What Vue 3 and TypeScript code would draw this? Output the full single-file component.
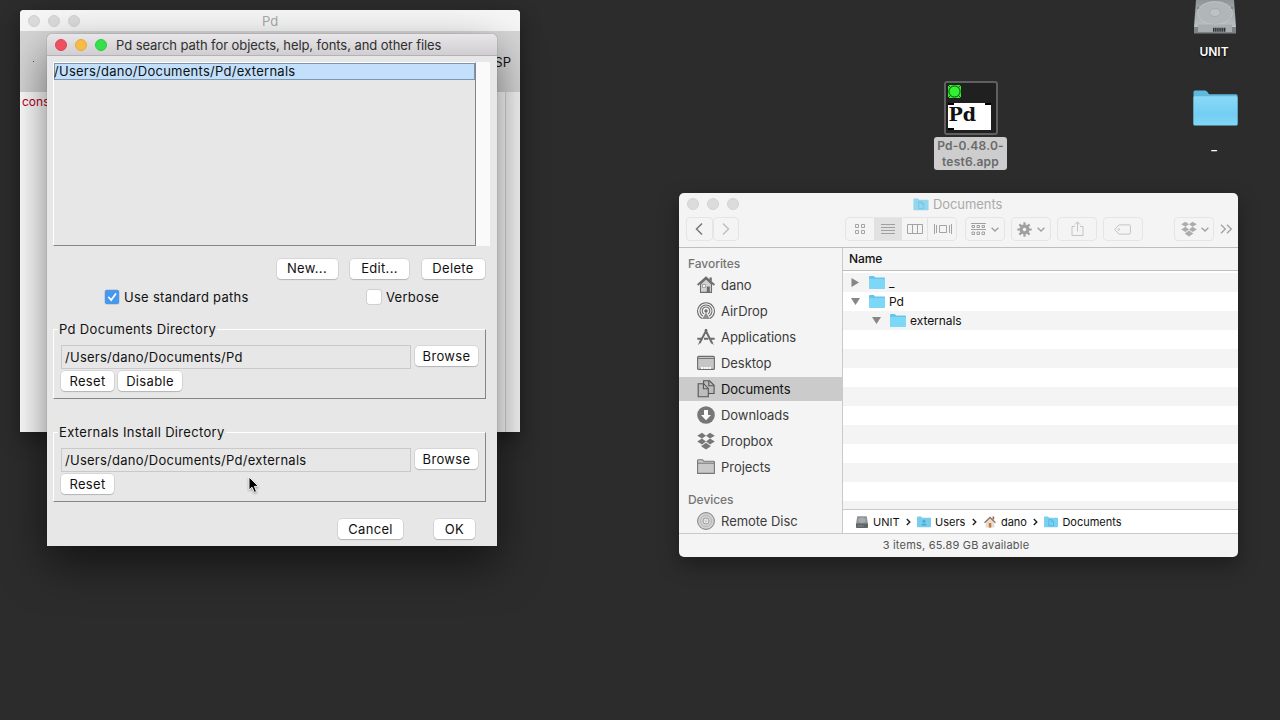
<script setup lang="ts">
interface Place {
  label: string
  icon: string
  selected?: boolean
}
interface FileRow {
  name: string
  open: boolean
  level: number
}

const favorites: Place[] = [
  { label: 'dano', icon: 'home' },
  { label: 'AirDrop', icon: 'airdrop' },
  { label: 'Applications', icon: 'apps' },
  { label: 'Desktop', icon: 'desktop' },
  { label: 'Documents', icon: 'documents', selected: true },
  { label: 'Downloads', icon: 'downloads' },
  { label: 'Dropbox', icon: 'dropbox' },
  { label: 'Projects', icon: 'projects' },
]

const files: FileRow[] = [
  { name: '_', open: false, level: 0 },
  { name: 'Pd', open: true, level: 0 },
  { name: 'externals', open: true, level: 1 },
]

const crumbs: Place[] = [
  { label: 'UNIT', icon: 'drive-small' },
  { label: 'Users', icon: 'folder-user' },
  { label: 'dano', icon: 'home-color' },
  { label: 'Documents', icon: 'folder-doc' },
]
</script>

<template>
  <div class="screen">
    <svg class="sprite" width="0" height="0">
      <defs>
        <linearGradient id="gFolder" x1="0" y1="0" x2="0" y2="1">
          <stop offset="0" stop-color="#8ad9f7" />
          <stop offset="0.6" stop-color="#74cef3" />
          <stop offset="1" stop-color="#80d7f5" />
        </linearGradient>
        <linearGradient id="gDrive" x1="0" y1="0" x2="0" y2="1">
          <stop offset="0" stop-color="#8f9698" />
          <stop offset="1" stop-color="#bcc1c2" />
        </linearGradient>
      </defs>
      <symbol id="home" viewBox="0 0 18 18">
        <path d="M12.5 1.5h2.3v4l-2.3-2z" fill="#6c6c6c" />
        <path d="M3.5 8v8.4h11V8L9 2.8z" fill="#d2d2d2" stroke="#6c6c6c" stroke-width="1.1" />
        <path d="M.6 9L9 1.5 17.4 9" fill="none" stroke="#6c6c6c" stroke-width="1.7" />
        <path d="M9.8 10.5h3v6h-3z" fill="#6c6c6c" />
        <path d="M5.5 8.5h3v3h-3z" fill="#f4f4f4" stroke="#8b8b8b" stroke-width=".7" />
      </symbol>
      <symbol id="airdrop" viewBox="0 0 18 18">
        <g fill="none" stroke="#6c6c6c" stroke-width="1.1">
          <path d="M5.2 16.6a8.4 8.4 0 1 1 7.6 0" />
          <path d="M5.9 14.1a6 6 0 1 1 6.2 0" />
          <path d="M6.8 11.9a3.8 3.8 0 1 1 4.4 0" />
        </g>
        <circle cx="9" cy="9" r="1.7" fill="#6c6c6c" />
        <path d="M9 10.5l4 6.5H5z" fill="#8f8f8f" />
      </symbol>
      <symbol id="apps" viewBox="0 0 18 18">
        <g fill="none" stroke="#6c6c6c">
          <path d="M8.2 1.5l6.9 13.8M9.8 1.5L2.6 15" stroke-width="2" />
          <path d="M.3 10.7h5M7 10.7h4.3M13.3 10.7h4.4" stroke-width="2" />
          <path d="M14.6 13.8l1.7 2.7M3.2 13.8l-1.8 2.7" stroke-width="1" />
        </g>
      </symbol>
      <symbol id="desktop" viewBox="0 0 18 18">
        <rect x=".6" y="2.4" width="16.8" height="13" rx="1" fill="#c6c6c6" stroke="#6c6c6c" stroke-width="1.1" />
        <path d="M1 4.5h16" stroke="#777" />
        <path d="M4 14h10" stroke="#fff" stroke-width="2" stroke-dasharray="2 .6" />
      </symbol>
      <symbol id="documents" viewBox="0 0 18 18">
        <g fill="#bdbdbd" stroke="#555" stroke-width="1.1">
          <path d="M6.6.8h6l4.5 4.5v8.2H6.6z" />
          <path d="M11.8 1v4.8h5" fill="none" />
          <path d="M1.2 3.7h5.5l4.6 4.7v8.3H1.2z" />
          <path d="M6.4 4v4.8h4.8" fill="none" />
        </g>
      </symbol>
      <symbol id="downloads" viewBox="0 0 18 18">
        <circle cx="9" cy="9" r="8.8" fill="#777" />
        <path d="M7 4h4v5h3l-5 5.2L4 9h3z" fill="#fff" />
      </symbol>
      <symbol id="dropbox" viewBox="0 0 18 18">
        <path
          d="M5 .8l4 2.900-4 2.900-4.800-2.900zM13 .8l4.800 2.900L13 6.600 9 3.700zM.2 9.500L5 6.600l4 2.900-4 2.900zM13 6.600l4.800 2.900L13 12.400 9 9.500zM4.500 13.200l.7.300L9 10.800l3.800 2.700.7-.3v1.200L9 17.400l-4.500-3z"
          fill="currentColor"
        />
      </symbol>
      <symbol id="projects" viewBox="0 0 18 18">
        <path d="M.6 15.4V2.6q0-.9.9-.9h4l1.3 1.6h9.7q.9 0 .9.9v11.2z" fill="#c9c9c9" stroke="#777" stroke-width="1.1" />
        <path d="M1 5.2h16" stroke="#777" />
      </symbol>
      <symbol id="disc" viewBox="0 0 18 18">
        <circle cx="9" cy="9" r="8.4" fill="#d2d2d2" stroke="#808080" stroke-width="1" />
        <circle cx="9" cy="9" r="5.6" fill="none" stroke="#aaa" stroke-width=".7" />
        <circle cx="9" cy="9" r="3" fill="#e9e9e9" stroke="#999" stroke-width=".9" />
        <circle cx="9" cy="9" r="1" fill="#fff" stroke="#999" stroke-width=".5" />
      </symbol>
      <symbol id="folder" viewBox="0 0 16 13">
        <path d="M0 12V1q0-1 1-1h3.8l1.4 1.5H15q1 0 1 1V12q0 .7-1 .7H1q-1 0-1-.7z" fill="#67c4ea" />
        <path d="M0 3.1h16V12q0 .7-1 .7H1q-1 0-1-.7z" fill="#7dd7f6" />
      </symbol>
      <symbol id="folder-user" viewBox="0 0 14 12">
        <path d="M0 10.500V1.300q0-.8.8-.8H4l1.200 1.200h8q.8 0 .8.8v8q0 .7-.8.7H.8q-.8 0-.8-.7z" fill="#79cdec" />
        <circle cx="7" cy="5.200" r="1.500" fill="#4fa9cf" />
        <path d="M4.200 9.600q.2-2.200 2.800-2.200t2.800 2.200z" fill="#4fa9cf" />
      </symbol>
      <symbol id="folder-doc" viewBox="0 0 14 12">
        <path d="M0 10.500V1.300q0-.8.8-.8H4l1.200 1.200h8q.8 0 .8.8v8q0 .7-.8.7H.8q-.8 0-.8-.7z" fill="#79d0f0" />
        <path d="M4.800 3.500h2.700l2 2v4.300H4.800zM7.300 3.700v2h2" fill="none" stroke="#55b0d6" stroke-width=".7" />
      </symbol>
      <symbol id="home-color" viewBox="0 0 14 12">
        <path d="M9.500.5h1.700v3H9.500z" fill="#9a6b52" />
        <path d="M2.600 6L7 2l4.400 4v5.600H2.600z" fill="#e6ddd0" />
        <path d="M5.800 7h2.500v4.600H5.800z" fill="#c87b41" />
        <path d="M1.500 6.700L7 1.500l5.500 5.200" fill="none" stroke="#8b7468" stroke-width="1.300" />
      </symbol>
      <symbol id="drive-small" viewBox="0 0 14 12">
        <path d="M2.200.2h9.600l1.200 8H1z" fill="#8f9597" />
        <ellipse cx="7" cy="4.200" rx="3.800" ry="2.600" fill="#a6acae" />
        <path d="M1 7.500h12v3.700q0 .8-.8.8H1.800q-.8 0-.8-.8z" fill="#5f6466" />
        <path d="M2.500 10h6" stroke="#8b9193" stroke-width=".8" />
      </symbol>
      <symbol id="chev" viewBox="0 0 8 5">
        <path d="M.6.700L4 4 7.400.700" fill="none" stroke="#a0a0a0" stroke-width="1.300" />
      </symbol>
    </svg>

    <!-- Desktop items -->
    <div class="desk drive">
      <svg width="44" height="35" viewBox="0 0 44 35">
        <path d="M3 0h38l2 27H1z" fill="url(#gDrive)" />
        <path d="M1 27h42v6.500H1z" fill="#7d8486" />
        <ellipse cx="22" cy="13" rx="17.500" ry="11.500" fill="#b1b6b8" stroke="#c6cbcc" stroke-width=".7" />
        <ellipse cx="22" cy="12.500" rx="5.500" ry="4" fill="#bcc1c2" stroke="#9aa0a2" stroke-width=".6" />
        <path d="M5 24.500h34v7.500H5z" fill="#a8aeb0" />
        <path d="M20 29.700h13" stroke="#2e3133" stroke-width="4" stroke-dasharray="1.500 .6" />
        <circle cx="5" cy="8" r=".7" fill="#4d5153" /><circle cx="39" cy="8" r=".7" fill="#4d5153" />
      </svg>
      <span>UNIT</span>
    </div>
    <div class="desk deskfolder">
      <svg width="46" height="36" viewBox="0 0 46 36">
        <path d="M.5 34V2q0-1.500 1.500-1.500h10q1.500 0 2.500 1.500l1.500 2.200h27q1.500 0 1.500 1.500V34z" fill="#5fb9df" />
        <path d="M.5 7.500q0-1.300 1.300-1.300h41.400q1.300 0 1.300 1.300V34.200q0 1.300-1.300 1.300H1.800Q.5 35.500.5 34.200z" fill="url(#gFolder)" />
      </svg>
      <span>_</span>
    </div>
    <div class="desk pdapp">
      <div class="pdicon">
        <svg width="13" height="13" viewBox="0 0 14 14">
          <rect width="14" height="14" fill="#32f032" />
          <circle cx="7" cy="7" r="6" fill="#32f032" stroke="#0b3b0b" stroke-width="1" />
          <path d="M0 0l2.500 2.500M14 0l-2.500 2.500M0 14l2.500-2.500M14 14l-2.500-2.500" stroke="#0b3b0b" />
        </svg>
        <div class="object">Pd</div>
      </div>
      <div class="pdname">Pd-0.48.0-<br />test6.app</div>
    </div>

    <!-- Pd console -->
    <section class="win console">
      <header class="bar"><i /><i /><i /><b>Pd</b></header>
      <div class="tools"><em /><span>DSP</span></div>
      <div class="log"><span>consistency</span><div class="scroll" /></div>
    </section>

    <!-- Search path dialog -->
    <section class="win dialog">
      <header class="bar live"><i class="red" /><i class="yel" /><i class="grn" /><b>Pd search path for objects, help, fonts, and other files</b></header>
      <div class="body">
        <div class="listwrap">
          <div class="list"><div class="item">/Users/dano/Documents/Pd/externals</div></div>
          <div class="lscroll" />
        </div>
        <div class="actions">
          <button class="new">New...</button><button class="edit">Edit...</button><button class="browse">Delete</button>
        </div>
        <div class="checks">
          <label class="first">
            <span class="box on"><svg width="14" height="14" viewBox="0 0 14 14"><path d="M3.700 7.300l2.500 2.800L10.600 4" fill="none" stroke="#fff" stroke-width="1.700" stroke-linecap="round" /></svg></span>
            <span>Use standard paths</span>
          </label>
          <label><span class="box" /><span>Verbose</span></label>
        </div>
        <div class="frame">
          <span class="legend">Pd Documents Directory</span>
          <div class="line"><div class="entry">/Users/dano/Documents/Pd</div><button class="browse">Browse</button></div>
          <div class="line second"><button class="reset">Reset</button><button class="disable">Disable</button></div>
        </div>
        <div class="frame lower">
          <span class="legend">Externals Install Directory</span>
          <div class="line"><div class="entry">/Users/dano/Documents/Pd/externals</div><button class="browse">Browse</button></div>
          <div class="line second"><button class="reset">Reset</button></div>
        </div>
        <div class="confirm"><button class="cancel">Cancel</button><button class="ok">OK</button></div>
      </div>
    </section>

    <!-- Finder -->
    <section class="win finder">
      <header class="ftitle">
        <div class="lights"><i /><i /><i /></div>
        <div class="fname"><svg width="16" height="13"><use href="#folder-doc" /></svg><span>Documents</span></div>
      </header>
      <div class="toolbar">
        <div class="tb nav"><svg width="8" height="14" viewBox="0 0 8 14"><path d="M7 1.500L1.500 7 7 12.500" fill="none" stroke="#777" stroke-width="1.500" /></svg></div>
        <div class="tb nav next"><svg width="8" height="14" viewBox="0 0 8 14"><path d="M1 1.500L6.500 7 1 12.500" fill="none" stroke="#c0c0c0" stroke-width="1.500" /></svg></div>
        <div class="tb views">
          <span class="v1"><svg width="12" height="12" viewBox="0 0 12 12" fill="none" stroke="#a4a4a4"><path d="M1.500 1.500h3v3h-3zM7.500 1.500h3v3h-3zM1.500 7.500h3v3h-3zM7.500 7.500h3v3h-3z" /></svg></span>
          <span class="v2"><svg width="16" height="12" viewBox="0 0 16 12" stroke="#a0a0a0"><path d="M1 1.500h14M1 4.500h14M1 7.500h14M1 10.500h14" /></svg></span>
          <span class="v3"><svg width="16" height="12" viewBox="0 0 16 12" fill="none" stroke="#a4a4a4"><path d="M.5 1.500h15v9H.5zM5.500 1.500v9M10.500 1.500v9" /></svg></span>
          <span class="v4"><svg width="20" height="12" viewBox="0 0 20 12" fill="none" stroke="#a4a4a4"><path d="M1.500 1v10M3.500 2v8M6.500 2.500h7v7h-7zM16.500 2v8M18.500 1v10" /></svg></span>
        </div>
        <div class="tb arrange">
          <svg width="15" height="13" viewBox="0 0 15 13" fill="none" stroke="#a0a0a0"><path d="M0 .5h15M0 6.500h15M1 2.500h2.500v2H1zM6 2.500h2.500v2H6zM11 2.500h2.500v2H11zM1 9h2.500v2.500H1zM6 9h2.500v2.500H6zM11 9h2.500v2.500H11z" /></svg>
          <svg width="8" height="5"><use href="#chev" /></svg>
        </div>
        <div class="tb gear">
          <svg width="15" height="15" viewBox="0 0 15 15"><path d="M7.500.3v14.400M.3 7.500h14.400M2.400 2.400l10.200 10.200M12.600 2.400L2.400 12.600" stroke="#a0a0a0" stroke-width="2.200" /><circle cx="7.500" cy="7.500" r="5" fill="#a0a0a0" /><circle cx="7.500" cy="7.500" r="1.700" fill="#f4f4f4" /></svg>
          <svg width="8" height="5"><use href="#chev" /></svg>
        </div>
        <div class="tb share"><svg width="13" height="16" viewBox="0 0 13 16" fill="none" stroke="#c4c4c4"><path d="M4 5.500H1v9h11v-9H9M6.500 10.500V1M3.800 3.600L6.500.9l2.700 2.700" /></svg></div>
        <div class="tb tag"><svg width="17" height="11" viewBox="0 0 17 11" fill="none" stroke="#c4c4c4"><path d="M5 .9h10.200q1.200 0 1.200 1.200v6.800q0 1.200-1.200 1.200H5L.7 5.500z" /><circle cx="4.800" cy="5.500" r=".8" /></svg></div>
        <div class="tb dbx"><svg class="grey" width="16" height="16"><use href="#dropbox" /></svg><svg width="8" height="5"><use href="#chev" /></svg></div>
        <svg class="more" width="13" height="10" viewBox="0 0 13 10" fill="none" stroke="#a4a4a4" stroke-width="1.400"><path d="M1 .8L5.300 5 1 9.200M7 .8L11.300 5 7 9.200" /></svg>
      </div>
      <div class="main">
        <aside>
          <h4>Favorites</h4>
          <div v-for="p in favorites" :key="p.label" class="place" :class="{ selected: p.selected }">
            <svg width="18" height="18"><use :href="'#' + p.icon" /></svg><span>{{ p.label }}</span>
          </div>
          <h4 class="dev">Devices</h4>
          <div class="place"><svg width="18" height="18"><use href="#disc" /></svg><span>Remote Disc</span></div>
        </aside>
        <div class="content">
          <div class="head">Name</div>
          <div class="rows">
            <div v-for="f in files" :key="f.name" class="row" :class="['l' + f.level, { open: f.open }]">
              <svg class="tri" width="9" height="9" viewBox="0 0 9 9"><path :d="f.open ? 'M0 1h9L4.500 8z' : 'M.5 0v9L8 4.500z'" fill="#868686" /></svg>
              <svg width="16" height="13"><use href="#folder" /></svg><span>{{ f.name }}</span>
            </div>
          </div>
          <div class="path">
            <template v-for="(c, n) in crumbs" :key="c.label">
              <svg v-if="n" class="sep" width="5" height="8" viewBox="0 0 5 8"><path d="M.8 1L3.800 4 .8 7" fill="none" stroke="#222" stroke-width="1.400" /></svg>
              <svg width="14" height="12"><use :href="'#' + c.icon" /></svg><span>{{ c.label }}</span>
            </template>
          </div>
        </div>
      </div>
      <footer>3 items, 65.89 GB available</footer>
    </section>

    <svg class="cursor" width="13" height="19" viewBox="0 0 13 19"><path d="M1 1v13l3-2.800 2.300 5.200 2.200-1L6.300 10.400h4.200z" fill="#000" stroke="#fff" stroke-width=".9" /></svg>
  </div>
</template>

<style>
body {
  margin: 0;
  overflow: hidden;
}
</style>

<style scoped>
.screen {
  position: relative;
  width: 1280px;
  height: 720px;
  overflow: hidden;
  background: #2c2c2c;
  font-family: Inter, 'Liberation Sans', sans-serif;
  font-size: 13px;
  color: #111;
}
.screen * {
  box-sizing: border-box;
}
.screen svg {
  display: block;
  flex: none;
}
.sprite,
.desk,
.win,
.cursor {
  position: absolute;
}
.screen span,
.screen b {
  white-space: nowrap;
}

/* desktop */
.desk {
  display: flex;
  flex-direction: column;
  align-items: center;
  color: #fff;
  font-weight: 600;
  font-size: 12px;
}
.drive {
  left: 1174px;
  top: 0;
  width: 80px;
}
.drive svg {
  margin-left: 2px;
}
.drive span {
  margin-top: 9px;
  line-height: 15px;
  text-shadow: 0 1px 2px #000;
}
.deskfolder {
  left: 1174px;
  top: 90px;
  width: 80px;
}
.deskfolder svg {
  margin-left: 3px;
}
.deskfolder span {
  margin-top: 12px;
  line-height: 15px;
}
.pdapp {
  left: 930px;
  top: 81px;
  width: 81px;
}
.pdicon {
  width: 54px;
  height: 54px;
  border: 2px solid #606060;
  border-radius: 3px;
  background: #202020;
  padding: 2px 0 0 2px;
}
.object {
  width: 43px;
  height: 27px;
  margin-top: 5px;
  background:
    linear-gradient(#000, #000) 0 0 / 6px 2px no-repeat,
    linear-gradient(#000, #000) 100% 0 / 6px 2px no-repeat,
    linear-gradient(#000, #000) 0 100% / 6px 2px no-repeat,
    #fff;
  color: #111;
  font: bold 19px/23px 'DejaVu Serif', serif;
  padding-left: 1px;
}
.pdname {
  margin-top: 2px;
  width: 73px;
  height: 33px;
  padding-top: 1px;
  border-radius: 3px;
  background: #cdcdcd;
  color: #6a6a6a;
  text-align: center;
  line-height: 16px;
  letter-spacing: 0.22px;
}

/* shared window chrome */
.win {
  display: flex;
  flex-direction: column;
  overflow: hidden;
}
.bar {
  display: flex;
  align-items: center;
  flex: none;
  height: 22px;
}
i {
  width: 12px;
  height: 12px;
  margin-right: 8px;
  border-radius: 50%;
  background: #dcdcdc;
  border: 1px solid #d3d3d3;
}
.bar b {
  font-weight: 400;
}

.console {
  left: 20px;
  top: 10px;
  width: 500px;
  height: 421.5px;
  border-radius: 4px 4px 0 0;
  background: #fff;
  box-shadow: 0 8px 20px rgba(0, 0, 0, 0.35);
}
.console .bar {
  height: 21px;
  padding: 1px 0 0 8px;
  background: #f6f6f6;
}
.console .bar b {
  margin-left: 174px;
  color: #a9a9a9;
}
.tools {
  display: flex;
  justify-content: space-between;
  align-items: center;
  height: 61px;
  padding: 0 9px 0 13px;
  background: #d6d6d6;
}
.tools em {
  width: 1px;
  height: 1px;
  background: #555;
}
.log {
  display: flex;
  justify-content: space-between;
  flex: 1;
  background: #fff;
  color: #c00022;
  font-size: 12px;
}
.log span {
  padding: 2px 0 0 2px;
}
.scroll {
  width: 15px;
  background: #f6f6f6;
  border-left: 1px solid #d8d8d8;
}

.dialog {
  left: 47px;
  top: 34px;
  width: 450px;
  height: 512px;
  border-radius: 5px 5px 0 0;
  background: #e7e7e7;
  box-shadow:
    0 0 1px rgba(0, 0, 0, 0.6),
    0 18px 45px rgba(0, 0, 0, 0.55);
}
.live {
  padding-left: 8px;
  background: linear-gradient(#e8e6e8, #d0ced0);
  border-bottom: 1px solid #b4b2b4;
}
.live b {
  margin-left: 1px;
  color: #2f2f2f;
  letter-spacing: -0.07px;
}
.red {
  background: #ed5161;
  border-color: #dc4655;
}
.yel {
  background: #f6bc45;
  border-color: #e4aa3a;
}
.grn {
  background: #36df4d;
  border-color: #2bcb42;
}
.body {
  padding: 6px 6px 0;
  letter-spacing: 0.33px;
}
.listwrap {
  display: flex;
  height: 184px;
}
.list {
  width: 423px;
  border: 1px solid;
  border-color: #fff #858585 #858585 #fff;
}
.item {
  height: 17px;
  background: #c2e0fb;
  border: 1px solid #7e95ab;
  line-height: 15px;
  text-indent: -1px;
  letter-spacing: 0.26px;
}
.lscroll {
  width: 14px;
  background: #fafafa;
}
.actions {
  display: flex;
  justify-content: flex-end;
  gap: 12.5px;
  padding: 12.5px 6.5px 0 0;
}
button {
  flex: none;
  height: 20px;
  padding: 0;
  border: 0;
  border-radius: 4px;
  background: #fff;
  box-shadow:
    0 0 0 0.5px rgba(0, 0, 0, 0.14),
    0 1px 1px rgba(0, 0, 0, 0.16);
  color: #111;
  font: inherit;
  letter-spacing: inherit;
  line-height: 19px;
}
.ok { width: 41px; }
.reset { width: 53px; }
.edit { width: 59px; }
.new { width: 61px; }
.browse { width: 63px; }
.disable { width: 64px; }
.cancel { width: 65px; }
.checks {
  display: flex;
  padding: 9px 0 0 52px;
  height: 26px;
}
.checks label {
  display: flex;
  align-items: center;
  height: 18px;
  letter-spacing: 0.28px;
}
.checks .first {
  width: 262px;
}
.box {
  width: 14px;
  height: 14px;
  margin-right: 5px;
  border-radius: 2px;
  background: #fff;
  box-shadow: 0 0 0 0.5px rgba(0, 0, 0, 0.2);
}
.on {
  background: #4598ed;
}
.frame {
  position: relative;
  width: 433px;
  height: 70px;
  margin-top: 24.5px;
  padding: 15px 7px 0;
  border: 1px solid;
  border-color: #fff #858585 #858585 #fff;
}
.lower {
  margin-top: 33px;
}
.legend {
  position: absolute;
  left: 4px;
  top: -9px;
  padding: 0 1px;
  background: #e7e7e7;
  line-height: 16px;
}
.line {
  display: flex;
  align-items: flex-start;
  gap: 4px;
}
.line .browse {
  margin-top: 1px;
}
.entry {
  width: 350px;
  height: 24px;
  padding-left: 3px;
  border: 1px solid #c9c9c9;
  line-height: 23px;
  letter-spacing: 0.26px;
}
.second {
  margin-top: 2px;
}
.confirm {
  display: flex;
  justify-content: flex-end;
  gap: 31px;
  padding: 17px 16px 0 0;
}

/* finder */
.finder {
  left: 679px;
  top: 193px;
  width: 559px;
  height: 364px;
  border-radius: 5px;
  background: #f4f4f4;
  box-shadow: 0 8px 20px rgba(0, 0, 0, 0.35);
}
.ftitle {
  display: flex;
  height: 22px;
  align-items: center;
}
.lights {
  display: flex;
  width: 234px;
  padding-left: 8px;
}
.fname {
  display: flex;
  align-items: center;
  gap: 4px;
  color: #aaa;
  letter-spacing: -0.08px;
}
.fname svg {
  opacity: 0.8;
}
.toolbar {
  display: flex;
  height: 33px;
  padding: 2px 0 0 7px;
  border-bottom: 1px solid #bcc0bc;
}
.tb {
  display: flex;
  align-items: center;
  justify-content: center;
  gap: 5px;
  width: 40px;
  height: 24px;
  margin-right: 6px;
  border: 1px solid #e5e5e5;
  border-radius: 4px;
}
.tb.nav {
  width: 27px;
  margin: 0;
  padding-right: 2px;
}
.tb.next {
  width: 26px;
  padding-right: 0;
}
.views {
  width: 112px;
  margin: 0 8px 0 106px;
  gap: 0;
  overflow: hidden;
}
.views span {
  display: flex;
  align-items: center;
  justify-content: center;
  height: 22px;
}
.v1 { width: 28px; }
.v2 { width: 28px; background: #e1e1e1; }
.v3 { width: 26px; border-right: 1px solid #e3e3e3; }
.views .v4 { width: 28px; padding-left: 1px; }
.tag {
  padding-right: 1px;
}
.dbx {
  margin: 0 6px 0 25px;
  gap: 4px;
  padding-left: 1px;
}
.grey {
  color: #acacac;
}
.more {
  margin-top: 7px;
}
.main {
  display: flex;
  height: 285px;
}
aside {
  width: 164px;
  padding-top: 6px;
  border-right: 1px solid #c9c9c9;
  letter-spacing: -0.05px;
  overflow: hidden;
}
h4 {
  margin: 0;
  padding-left: 9px;
  height: 18px;
  line-height: 19px;
  font-size: 12px;
  font-weight: 500;
  color: #747474;
}
h4.dev {
  margin-top: 10px;
}
.place {
  display: flex;
  align-items: center;
  gap: 6px;
  height: 26px;
  padding-left: 18px;
  color: #3c3c3c;
}
.place svg {
  color: #777;
}
.selected {
  height: 24px;
  margin: 1px 0;
  background: #cbcbcb;
  color: #111;
}
.content {
  display: flex;
  flex-direction: column;
  flex: 1;
}
.head {
  height: 23px;
  padding-left: 6px;
  border-bottom: 1px solid #bcc0bc;
  line-height: 22px;
  font-size: 12px;
  font-weight: 500;
  letter-spacing: -0.1px;
}
.rows {
  height: 238px;
  padding-top: 2px;
  background: repeating-linear-gradient(#f4f4f4 0 19px, #fff 19px 38px) 0 2px / 100% 236px no-repeat #fff;
  font-size: 12px;
}
.row {
  display: flex;
  align-items: center;
  height: 19px;
  padding-left: 8px;
}
.row.open {
  padding-left: 7.5px;
}
.row.l1 {
  padding-left: 28.5px;
}
.tri {
  margin-right: 9px;
}
.open .tri {
  margin-right: 9.5px;
}
.row span {
  margin-left: 4px;
  letter-spacing: -0.05px;
}
.path {
  display: flex;
  align-items: center;
  height: 24px;
  padding: 1px 0 0 12px;
  border-top: 1px solid #c9c9c9;
  background: #fff;
  font-size: 11px;
}
.path span {
  margin-left: 4px;
}
.sep {
  margin: 0 6px 0 6.5px;
}
footer {
  flex: 1;
  padding-right: 5px;
  border-top: 1px solid #c9c9c9;
  text-align: center;
  line-height: 22px;
  font-size: 11px;
  letter-spacing: 0.2px;
  color: #555;
}
.cursor {
  left: 248px;
  top: 476px;
  filter: drop-shadow(0 1px 1px rgba(0, 0, 0, 0.35));
}
</style>
